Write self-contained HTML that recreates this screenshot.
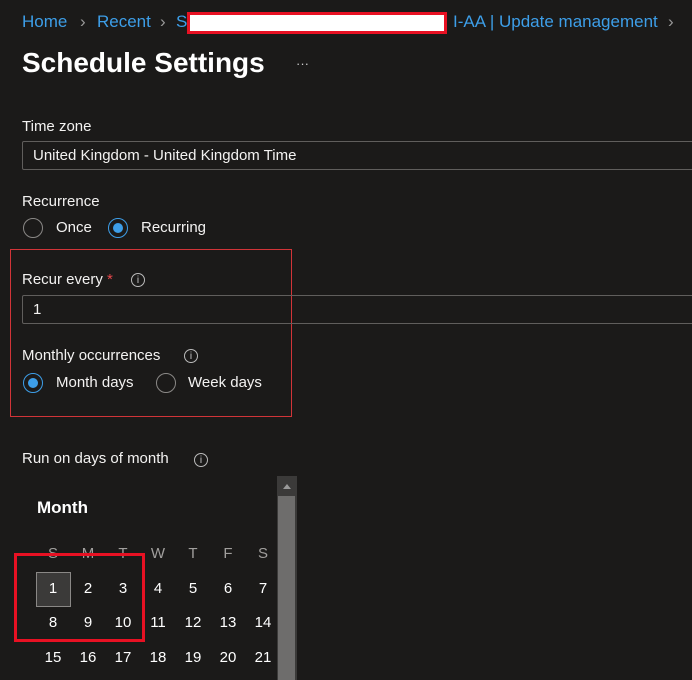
<!DOCTYPE html><html><head><style>
body{margin:0;width:692px;height:680px;background:#1b1a19;font-family:"Liberation Sans",sans-serif;color:#fff;position:relative;overflow:hidden}
.a{position:absolute;white-space:nowrap}
.l{color:#3d9ee8;font-size:17px}
.c{color:#999;font-size:17px}
.t{font-size:15px;color:#f3f2f1}
.in{position:absolute;border:1px solid #605e5c;border-radius:2px;height:29px;box-sizing:border-box}
.r{position:absolute;width:20px;height:20px;border:1px solid #8a8886;border-radius:50%;box-sizing:border-box}
.r.on{border-color:#3d9ee8}.r.on::after{content:"";position:absolute;left:4px;top:4px;width:10px;height:10px;border-radius:50%;background:#3d9ee8}
.i{position:absolute;width:14px;height:14px;border:1px solid #bbb;border-radius:50%;font-size:10px;text-align:center;line-height:13px;color:#ccc;box-sizing:border-box}
.d{position:absolute;width:30px;text-align:center;font-size:15px;color:#fff}
.h{color:#a19f9d}
</style></head><body>
<div class="a l" style="left:22px;top:12px">Home</div>
<div class="a c" style="left:80px;top:12px">›</div>
<div class="a l" style="left:97px;top:12px">Recent</div>
<div class="a c" style="left:160px;top:12px">›</div>
<div class="a l" style="left:176px;top:12px">S</div>
<div class="a" style="left:187px;top:12px;width:260px;height:22px;background:#fff;border:3px solid #e81123;box-sizing:border-box"></div>
<div class="a l" style="left:453px;top:12px">I-AA | Update management</div>
<div class="a c" style="left:668px;top:12px">›</div>
<div class="a" style="left:22px;top:47px;font-size:28px;font-weight:bold">Schedule Settings</div>
<div class="a" style="left:296px;top:56px;font-size:13px;color:#ccc">···</div>
<div class="a t" style="left:22px;top:118px">Time zone</div>
<div class="in" style="left:22px;top:141px;width:690px"></div>
<div class="a t" style="left:33px;top:147px">United Kingdom - United Kingdom Time</div>
<div class="a t" style="left:22px;top:193px">Recurrence</div>
<div class="r" style="left:23px;top:218px"></div><div class="a t" style="left:56px;top:219px">Once</div>
<div class="r on" style="left:108px;top:218px"></div><div class="a t" style="left:141px;top:219px">Recurring</div>
<div class="a" style="left:10px;top:249px;width:282px;height:168px;border:1px solid #d13438;box-sizing:border-box"></div>
<div class="a t" style="left:22px;top:271px">Recur every <span style="color:#e8474b">*</span></div>
<div class="i" style="left:131px;top:273px">i</div>
<div class="in" style="left:22px;top:295px;width:690px"></div>
<div class="a t" style="left:33px;top:301px">1</div>
<div class="a t" style="left:22px;top:347px">Monthly occurrences</div>
<div class="i" style="left:184px;top:349px">i</div>
<div class="r on" style="left:23px;top:373px"></div><div class="a t" style="left:56px;top:374px">Month days</div>
<div class="r" style="left:156px;top:373px"></div><div class="a t" style="left:188px;top:374px">Week days</div>
<div class="a t" style="left:22px;top:450px">Run on days of month</div>
<div class="i" style="left:194px;top:453px">i</div>
<div class="a" style="left:277px;top:476px;width:20px;height:204px;background:#3b3a39"></div>
<div class="a" style="left:278px;top:496px;width:17px;height:184px;background:#6e6d6c"></div>
<div class="a" style="left:283px;top:484px;width:0;height:0;border:4px solid transparent;border-bottom:5px solid #999;border-top:0"></div>
<div class="a" style="left:37px;top:498px;font-size:17px;font-weight:bold">Month</div>
<div class="a" style="left:36px;top:572px;width:35px;height:35px;background:#3b3a39;border:1px solid #8a8886;box-sizing:border-box"></div>
<div class="d h" style="left:38px;top:545px">S</div><div class="d h" style="left:73px;top:545px">M</div><div class="d h" style="left:108px;top:545px">T</div><div class="d h" style="left:143px;top:545px">W</div><div class="d h" style="left:178px;top:545px">T</div><div class="d h" style="left:213px;top:545px">F</div><div class="d h" style="left:248px;top:545px">S</div>
<div class="d" style="left:38px;top:580px">1</div><div class="d" style="left:73px;top:580px">2</div><div class="d" style="left:108px;top:580px">3</div><div class="d" style="left:143px;top:580px">4</div><div class="d" style="left:178px;top:580px">5</div><div class="d" style="left:213px;top:580px">6</div><div class="d" style="left:248px;top:580px">7</div>
<div class="d" style="left:38px;top:614px">8</div><div class="d" style="left:73px;top:614px">9</div><div class="d" style="left:108px;top:614px">10</div><div class="d" style="left:143px;top:614px">11</div><div class="d" style="left:178px;top:614px">12</div><div class="d" style="left:213px;top:614px">13</div><div class="d" style="left:248px;top:614px">14</div>
<div class="d" style="left:38px;top:649px">15</div><div class="d" style="left:73px;top:649px">16</div><div class="d" style="left:108px;top:649px">17</div><div class="d" style="left:143px;top:649px">18</div><div class="d" style="left:178px;top:649px">19</div><div class="d" style="left:213px;top:649px">20</div><div class="d" style="left:248px;top:649px">21</div>
<div class="a" style="left:14px;top:553px;width:131px;height:89px;border:3px solid #e81123;box-sizing:border-box"></div>
</body></html>
